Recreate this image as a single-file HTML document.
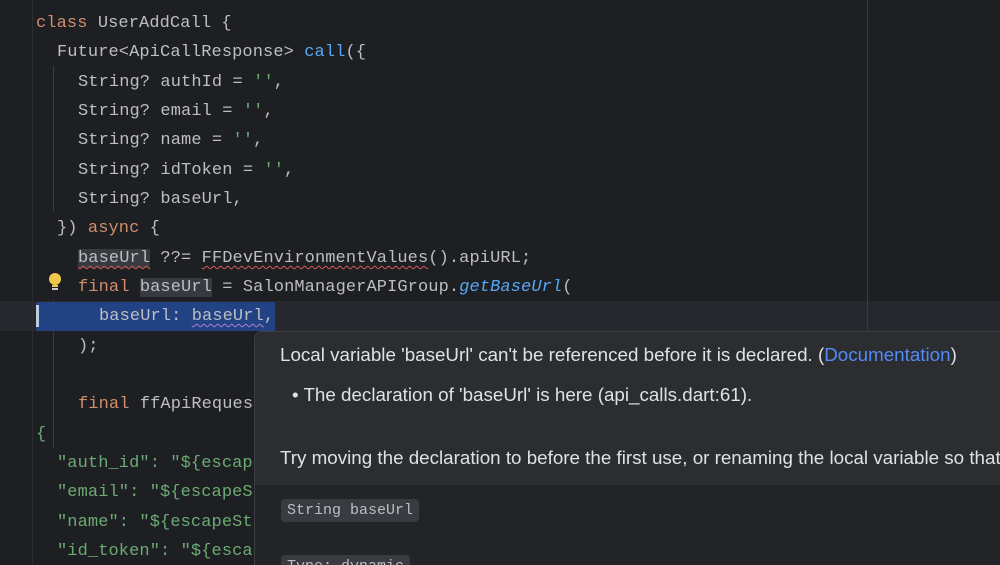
<!DOCTYPE html>
<html><head><style>
html,body{margin:0;width:1000px;height:565px;overflow:hidden}
body{background:#1e1f22;position:relative;font-family:"Liberation Mono",monospace;}
.l{position:absolute;left:0;font-size:17px;letter-spacing:0.1px;color:#bcbec4;white-space:pre;height:29px;line-height:29px;}
.k{color:#cf8e6d}.f{color:#56a8f5}.s{color:#6aab73}.i{color:#56a8f5;font-style:italic}
.hl{background:#373b3f}
.w{text-decoration:underline wavy #d65757;text-decoration-thickness:1px;text-underline-offset:3px}
.wp{text-decoration:underline wavy #b07fd0;text-decoration-thickness:1px;text-underline-offset:3px}
#tip{position:absolute;left:254px;top:331px;width:746px;height:234px;overflow:hidden;background:#2b2d30;border-left:1px solid #3c3e43;border-top:1px solid #3c3e43;border-radius:8px 0 0 0;font-family:"Liberation Sans",sans-serif;color:#dfe1e5;font-size:18.8px}
#tip .t{position:absolute;white-space:nowrap}
.code{position:absolute;font-family:"Liberation Mono",monospace;font-size:15px;background:#393b40;border-radius:4px;padding:3px 6px;color:#bcbec4}
</style></head><body>
<div style="position:absolute;left:0;top:301px;width:1000px;height:30px;background:#26282e"></div>
<div style="position:absolute;left:32px;top:0;width:1px;height:565px;background:#2b2d30"></div>
<div style="position:absolute;left:867px;top:0;width:1px;height:565px;background:#393b40"></div>
<div style="position:absolute;left:53px;top:66px;width:1px;height:146px;background:#393b40"></div>
<div style="position:absolute;left:53px;top:300px;width:1px;height:148px;background:#393b40"></div>
<div style="position:absolute;left:36px;top:302px;width:239px;height:29px;background:#214283"></div>
<div style="position:absolute;left:36px;top:305px;width:3px;height:22px;background:#bcd;"></div>
<svg style="position:absolute;left:47px;top:272px" width="16" height="22"><circle cx="8" cy="7" r="6" fill="#f0c84a"/><rect x="5" y="13" width="6" height="2" fill="#f0c84a"/><rect x="5" y="16" width="6" height="2" fill="#ccc"/></svg>
<div class="l" style="top:9px;left:36px"><span class="k">class</span> UserAddCall {</div>
<div class="l" style="top:38px;left:57px">Future&lt;ApiCallResponse&gt; <span class="f">call</span>({</div>
<div class="l" style="top:68px;left:78px">String? authId = <span class="s">''</span>,</div>
<div class="l" style="top:97px;left:78px">String? email = <span class="s">''</span>,</div>
<div class="l" style="top:126px;left:78px">String? name = <span class="s">''</span>,</div>
<div class="l" style="top:156px;left:78px">String? idToken = <span class="s">''</span>,</div>
<div class="l" style="top:185px;left:78px">String? baseUrl,</div>
<div class="l" style="top:214px;left:57px">}) <span class="k">async</span> {</div>
<div class="l" style="top:244px;left:78px"><span class="hl w">baseUrl</span> ??= <span class="w">FFDevEnvironmentValues</span>().apiURL;</div>
<div class="l" style="top:273px;left:78px"><span class="k">final</span> <span class="hl">baseUrl</span> = SalonManagerAPIGroup.<span class="i">getBaseUrl</span>(</div>
<div class="l" style="top:302px;left:99px">baseUrl: <span class="wp">baseUrl</span>,</div>
<div class="l" style="top:332px;left:78px">);</div>
<div class="l" style="top:390px;left:78px"><span class="k">final</span> ffApiRequestBody = <span class="s">'''</span></div>
<div class="l" style="top:420px;left:36px;color:#6aab73">{</div>
<div class="l" style="top:449px;left:57px;color:#6aab73">"auth_id": "${escapeStringForJson(authId)}",</div>
<div class="l" style="top:478px;left:57px;color:#6aab73">"email": "${escapeStringForJson(email)}",</div>
<div class="l" style="top:508px;left:57px;color:#6aab73">"name": "${escapeStringForJson(name)}",</div>
<div class="l" style="top:537px;left:57px;color:#6aab73">"id_token": "${escapeStringForJson(idToken)}",</div>
<div id="tip">
<div class="t" style="left:25px;top:12px">Local variable 'baseUrl' can't be referenced before it is declared. (<span style="color:#548af7">Documentation</span>)</div>
<div class="t" style="left:37px;top:52px">• The declaration of 'baseUrl' is here (api_calls.dart:61).</div>
<div class="t" style="left:25px;top:115px">Try moving the declaration to before the first use, or renaming the local variable so that it doesn't hide the field.</div>
<div style="position:absolute;left:0;top:153px;width:760px;height:90px;background:#232427"></div>
<div class="code" style="left:26px;top:167px">String baseUrl</div>
<div class="code" style="left:26px;top:223px">Type: dynamic</div>
</div>
</body></html>
